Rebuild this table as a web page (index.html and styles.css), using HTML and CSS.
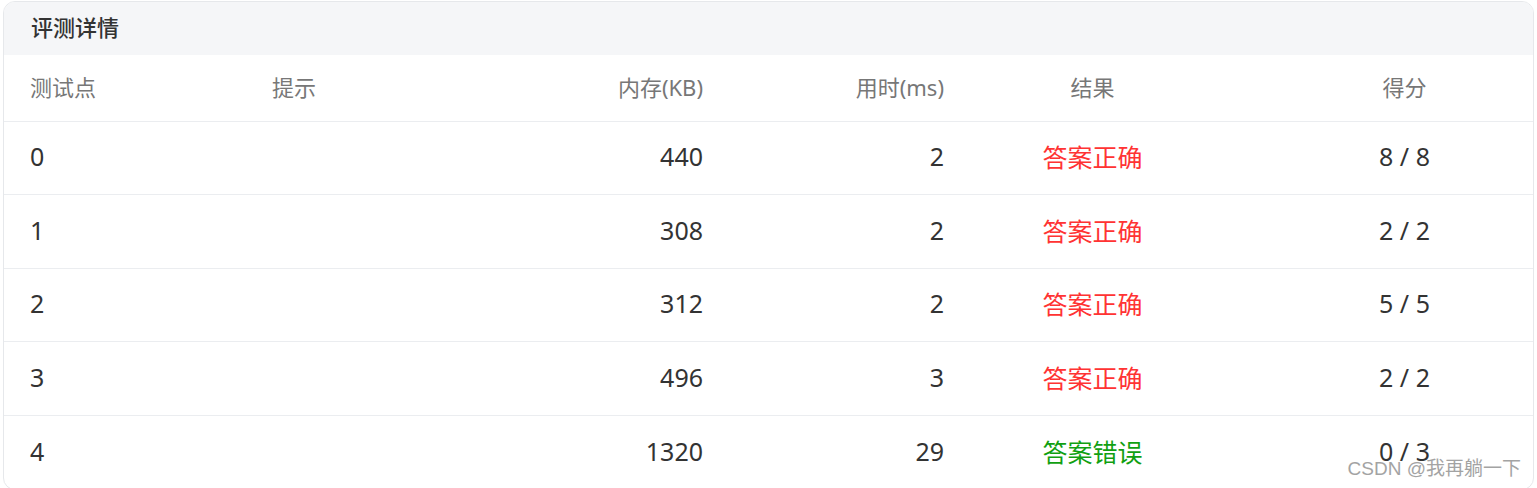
FILE: index.html
```html
<!DOCTYPE html>
<html lang="zh">
<head>
<meta charset="utf-8">
<link rel="stylesheet" href="styles.css">
</head>
<body>
<div class="card">
  <div class="card-title">评测详情</div>
  <table class="tbl">
    <colgroup>
      <col class="c1"><col class="c2"><col class="c3"><col class="c4"><col class="c5"><col class="c6">
    </colgroup>
    <thead>
      <tr>
        <th class="l">测试点</th>
        <th class="l">提示</th>
        <th class="r">内存(KB)</th>
        <th class="r">用时(ms)</th>
        <th class="c">结果</th>
        <th class="s">得分</th>
      </tr>
    </thead>
    <tbody>
      <tr><td class="l">0</td><td></td><td class="r">440</td><td class="r">2</td><td class="c ok">答案正确</td><td class="s">8 / 8</td></tr>
      <tr><td class="l">1</td><td></td><td class="r">308</td><td class="r">2</td><td class="c ok">答案正确</td><td class="s">2 / 2</td></tr>
      <tr><td class="l">2</td><td></td><td class="r">312</td><td class="r">2</td><td class="c ok">答案正确</td><td class="s">5 / 5</td></tr>
      <tr><td class="l">3</td><td></td><td class="r">496</td><td class="r">3</td><td class="c ok">答案正确</td><td class="s">2 / 2</td></tr>
      <tr><td class="l">4</td><td></td><td class="r">1320</td><td class="r">29</td><td class="c bad">答案错误</td><td class="s">0 / 3</td></tr>
    </tbody>
  </table>
  <div class="watermark">CSDN @我再躺一下</div>
</div>
</body>
</html>
```
FILE: styles.css
```css
html, body {
  margin: 0;
  padding: 0;
  background: #ffffff;
}
body {
  padding: 1px 3px 0 3px;
  font-family: "Noto Sans", "Noto Sans CJK SC", sans-serif;
  overflow: hidden;
}
.card {
  position: relative;
  width: 1531px;
  box-sizing: border-box;
  border: 1px solid #e6e8eb;
  border-radius: 12px;
  overflow: hidden;
  background: #fff;
}
.card-title {
  height: 53px;
  box-sizing: border-box;
  background: #f5f6f8;
  padding: 0 0 6px 27px;
  display: flex;
  align-items: center;
  font-size: 22px;
  font-weight: 500;
  color: #333;
}
.tbl {
  width: 100%;
  border-collapse: collapse;
  table-layout: fixed;
}
.c1 { width: 242px; }
.c2 { width: 245px; }
.c3 { width: 241px; }
.c4 { width: 241px; }
.c5 { width: 241px; }
.c6 { width: auto; }
th {
  height: 66px;
  font-weight: 400;
  font-size: 22px;
  color: #777;
  border-bottom: 1px solid #ebedf0;
  padding: 0 27px 4px 27px;
  box-sizing: border-box;
  white-space: nowrap;
}
td {
  height: 73.5px;
  font-size: 25px;
  color: #333;
  border-bottom: 1px solid #ebedf0;
  padding: 0 27px 3px 27px;
  box-sizing: border-box;
  white-space: nowrap;
}
tbody tr:last-child td { border-bottom: none; }
.l { text-align: left; padding-left: 26px; }
.r { text-align: right; padding-right: 29px; }
.c { text-align: center; padding-left: 0; padding-right: 2px; }
.s { text-align: center; padding-left: 64px; padding-right: 2px; }
.ok { color: #ff3333; }
.bad { color: #11a011; }
.watermark {
  position: absolute;
  right: 12px;
  bottom: 9px;
  font-family: "Liberation Sans", "Noto Sans CJK SC", sans-serif;
  font-size: 19px;
  color: #9a9a9a;
  opacity: 0.9;
}
```
